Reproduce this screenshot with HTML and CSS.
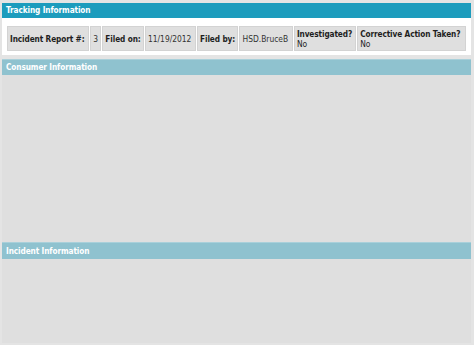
FILE: index.html
```html
<!DOCTYPE html>
<html>
<head>
<meta charset="utf-8">
<link rel="stylesheet" href="styles.css">
</head>
<body>
<div class="page">
  <section class="panel">
    <div class="hdr hdr-dark">Tracking Information</div>
    <div class="box">
      <table class="info">
        <tr>
          <td class="lbl">Incident Report #:</td>
          <td class="val">3</td>
          <td class="lbl">Filed on:</td>
          <td class="val">11/19/2012</td>
          <td class="lbl">Filed by:</td>
          <td class="val">HSD.BruceB</td>
          <td class="stack"><b>Investigated?</b><br>No</td>
          <td class="stack wide"><b>Corrective Action Taken?</b><br>No</td>
        </tr>
      </table>
    </div>
  </section>
  <section class="panel consumer">
    <div class="hdr hdr-light">Consumer Information</div>
    <div class="body consumer-body"></div>
  </section>
  <section class="panel incident">
    <div class="hdr hdr-light hdr-tall">Incident Information</div>
    <div class="body incident-body"></div>
  </section>
</div>
</body>
</html>
```

FILE: styles.css
```css
html, body {
  margin: 0;
  padding: 0;
  background: #e4e4e4;
}
body {
  font-family: "DejaVu Sans Condensed", "DejaVu Sans", Verdana, sans-serif;
  font-size: 8.4px;
  color: #1e1e1e;
}
.page {
  width: 469px;
  padding: 3px 3px 0 2px;
}
.hdr {
  height: 15px;
  line-height: 15px;
  padding-left: 4px;
  color: #fff;
  font-weight: bold;
  font-size: 8.2px;
  letter-spacing: -0.1px;
}
.hdr-dark {
  background: #1c9cbd;
}
.hdr-light {
  background: #8fc2cf;
  border-top: 1px solid #a9d0da;
}
.hdr-tall {
  height: 16px;
  line-height: 16px;
}
.box {
  background: #fff;
  height: 37px;
  padding: 8px 4px 0 4px;
  box-sizing: border-box;
}
.info {
  border-collapse: separate;
  border-spacing: 1px 0;
  height: 25px;
  width: 100%;
}
.info td {
  background: #dfdfdf;
  border: 1px solid #d3d3d3;
  padding: 0 1px 0 2px;
  white-space: nowrap;
  vertical-align: middle;
}
.info td.lbl,
.info td b {
  font-weight: bold;
  font-size: 8.2px;
  letter-spacing: -0.1px;
}
.info td.val {
  padding: 0 2px;
  color: #333;
}
.info td.stack {
  vertical-align: top;
  padding-top: 2px;
  line-height: 10px;
}
.consumer {
  margin-top: 4px;
}
.body {
  background: #dfdfdf;
}
.consumer-body {
  height: 167px;
}
.incident-body {
  height: 84px;
}
```
